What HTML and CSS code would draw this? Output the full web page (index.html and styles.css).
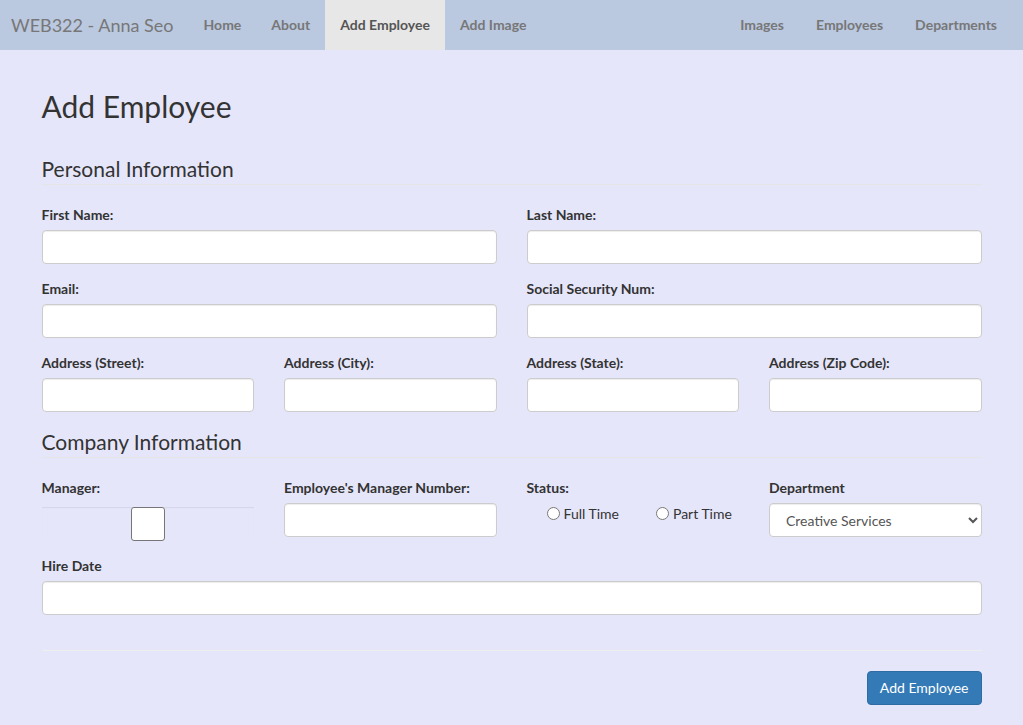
FILE: index.html
```html
<!DOCTYPE html>
<html lang="en">
<head>
<meta charset="utf-8">
<title>WEB322 - Add Employee</title>
<link rel="stylesheet" href="styles.css">
</head>
<body>
<nav class="navbar">
  <a class="brand" href="#">WEB322 - Anna Seo</a>
  <ul class="nav">
    <li><a href="#">Home</a></li>
    <li><a href="#">About</a></li>
    <li class="active"><a href="#">Add Employee</a></li>
    <li><a href="#">Add Image</a></li>
  </ul>
  <ul class="nav nav-right">
    <li><a href="#">Images</a></li>
    <li><a href="#">Employees</a></li>
    <li><a href="#">Departments</a></li>
  </ul>
</nav>

<main class="container">
  <h1 class="title">Add Employee</h1>
  <form class="form">
    <fieldset>
      <legend>Personal Information</legend>
      <div class="row row-2">
        <div class="form-group">
          <label>First Name:</label>
          <input class="form-control" type="text">
        </div>
        <div class="form-group">
          <label>Last Name:</label>
          <input class="form-control" type="text">
        </div>
      </div>
      <div class="row row-2">
        <div class="form-group">
          <label>Email:</label>
          <input class="form-control" type="text">
        </div>
        <div class="form-group">
          <label>Social Security Num:</label>
          <input class="form-control" type="text">
        </div>
      </div>
      <div class="row row-4">
        <div class="form-group">
          <label>Address (Street):</label>
          <input class="form-control" type="text">
        </div>
        <div class="form-group">
          <label>Address (City):</label>
          <input class="form-control" type="text">
        </div>
        <div class="form-group">
          <label>Address (State):</label>
          <input class="form-control" type="text">
        </div>
        <div class="form-group">
          <label>Address (Zip Code):</label>
          <input class="form-control" type="text">
        </div>
      </div>
    </fieldset>
    <fieldset>
      <legend>Company Information</legend>
      <div class="row row-4">
        <div class="form-group">
          <label>Manager:</label>
          <div class="check-control"><span class="check-box"></span></div>
        </div>
        <div class="form-group">
          <label>Employee's Manager Number:</label>
          <input class="form-control" type="text">
        </div>
        <div class="form-group">
          <label>Status:</label>
          <div class="radios">
            <span class="radio-item"><input type="radio" name="status" class="radio">Full Time</span>
            <span class="radio-item"><input type="radio" name="status" class="radio">Part Time</span>
          </div>
        </div>
        <div class="form-group">
          <label>Department</label>
          <select class="form-control select">
            <option>Creative Services</option>
          </select>
        </div>
      </div>
      <div class="form-group">
        <label>Hire Date</label>
        <input class="form-control" type="text">
      </div>
    </fieldset>
    <hr class="divider">
    <div class="actions">
      <button type="button" class="btn">Add Employee</button>
    </div>
  </form>
</main>
</body>
</html>
```
FILE: styles.css
```css
* { box-sizing: border-box; }
html, body { margin: 0; padding: 0; }
body {
  font-family: "Lato", "Liberation Sans", sans-serif;
  font-size: 14px;
  line-height: 20px;
  color: #333;
  background: #e6e6fa;
  height: 725px;
  overflow: hidden;
}
a { text-decoration: none; }

.navbar {
  display: flex;
  align-items: stretch;
  height: 50px;
  background: #bac8e0;
  padding: 0 10px 0 0;
  margin-bottom: 20px;
}
.brand {
  display: block;
  padding: 15px 15px 15px 11px;
  font-size: 18px;
  line-height: 20px;
  color: #777;
}
.nav {
  display: flex;
  list-style: none;
  margin: 0;
  padding: 0;
}
.nav-right { margin-left: auto; }
.nav li a {
  display: block;
  padding: 15px;
  line-height: 20px;
  font-weight: 700;
  color: #777;
}
.nav-right li a { padding: 15px 16px; }
.nav li.active a {
  background: #e7e7e7;
  color: #555;
}

.container {
  display: flow-root;
  width: 940px;
  margin: 0 auto;
}
.title {
  font-size: 30px;
  font-weight: 400;
  line-height: 33px;
  margin: 20px 0 10px;
}
.form { margin-top: 31px; }
fieldset {
  border: 0;
  margin: 0;
  padding: 0;
  min-width: 0;
}
legend {
  display: block;
  width: 100%;
  padding: 0;
  margin-bottom: 20px;
  font-size: 21px;
  line-height: 30px;
  color: #333;
  border-bottom: 1px solid #e5e5e5;
}
.row {
  display: grid;
  column-gap: 30px;
}
.row-2 { grid-template-columns: 1fr 1fr; }
.row-4 { grid-template-columns: repeat(4, 1fr); }
.form-group { margin-bottom: 15px; }
label {
  display: block;
  margin-bottom: 5px;
  font-weight: 700;
}
.form-control {
  display: block;
  width: 100%;
  height: 34px;
  padding: 6px 12px;
  font-family: inherit;
  font-size: 14px;
  line-height: 20px;
  color: #555;
  background: #fff;
  border: 1px solid #ccc;
  border-radius: 4px;
  box-shadow: inset 0 1px 1px rgba(0,0,0,.075);
}
.select { padding-left: 12px; }
.check-control {
  margin-top: 9px;
  height: 34px;
  display: flex;
  justify-content: center;
  box-shadow: inset 0 1px 1px rgba(0,0,0,.075);
}
.check-box {
  width: 34px;
  height: 34px;
  background: #fff;
  border: 1px solid #767676;
  border-radius: 3px;
}
.radios {
  display: flex;
  gap: 37px;
  padding-left: 20px;
  margin-top: 6px;
}
.radio-item {
  display: flex;
  align-items: center;
  color: #333;
}
.radio {
  width: 13px;
  height: 13px;
  margin: 0 4px 1px 0;
}
.divider {
  margin: 20px 0 20px;
  border: 0;
  border-top: 1px solid #eee;
}
.actions {
  display: flex;
  justify-content: flex-end;
}
.btn {
  font-family: inherit;
  font-size: 14px;
  line-height: 20px;
  padding: 6px 12px;
  color: #fff;
  background: #337ab7;
  border: 1px solid #2e6da4;
  border-radius: 4px;
}
```
